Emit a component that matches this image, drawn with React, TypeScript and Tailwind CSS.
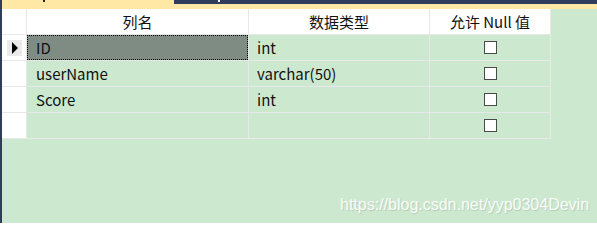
import React from "react";

const rows = [
  { name: "ID", type: "int", selected: true },
  { name: "userName", type: "varchar(50)" },
  { name: "Score", type: "int" },
  { name: "", type: "" },
];

function Check() {
  return <div className="w-[13px] h-[13px] border border-[#4a4a4a] bg-white" />;
}

export default function App() {
  return (
    <div
      className="relative w-[597px] h-[223px] overflow-hidden bg-[#CCE8CF] border-l-2 border-[#2E3D5C] text-[15px] text-[#111]"
      style={{ fontFamily: '"Noto Sans CJK SC", "Noto Sans", sans-serif' }}
    >
      <div className="flex h-[9px] bg-[#FFE8A6]">
        <div className="w-[172px] flex">
          <div className="ml-[41px] w-[2px] h-[2px] bg-[#222]" />
        </div>
        <div className="flex-1 h-[4px] bg-[#2E3D5C] flex">
          <div className="ml-[44px] w-[2px] h-[2px] bg-white" />
        </div>
      </div>
      <div className="grid grid-cols-[24px_221px_180px_120px] grid-rows-[25px_25px_25px_25px_25px] gap-px bg-[#E8E8E8] border-r border-b border-[#E8E8E8] w-fit leading-none">
        <div className="bg-white" />
        <div className="bg-white flex items-center justify-center">列名</div>
        <div className="bg-white flex items-center justify-center">数据类型</div>
        <div className="bg-white flex items-center justify-center">允许 Null 值</div>
        {rows.map((r, i) => (
          <React.Fragment key={i}>
            <div className="bg-white flex items-center justify-center">
              {r.selected && (
                <div className="w-[15px] h-[16px] bg-[#EBEBEB] flex items-center justify-center">
                  <svg width="7" height="12" viewBox="0 0 7 12">
                    <path d="M1 0 L7 6 L1 12 Z" fill="#000" />
                  </svg>
                </div>
              )}
            </div>
            <div
              className={
                r.selected
                  ? "bg-[#7F8C84] border border-dotted border-black flex items-center pl-[8px]"
                  : "bg-[#CCE8CF] flex items-center pl-[9px]"
              }
            >
              {r.name}
            </div>
            <div className="bg-[#CCE8CF] flex items-center pl-[8px]">{r.type}</div>
            <div className="bg-[#CCE8CF] flex items-center justify-center">
              <Check />
            </div>
          </React.Fragment>
        ))}
      </div>
      <div
        className="absolute left-[338px] top-[193px] text-[16px] text-white/90"
        style={{ fontFamily: '"Liberation Sans", Arial, sans-serif', textShadow: "1px 1px 1px rgba(0,0,0,0.12)" }}
      >
        https://blog.csdn.net/yyp0304Devin
      </div>
    </div>
  );
}
